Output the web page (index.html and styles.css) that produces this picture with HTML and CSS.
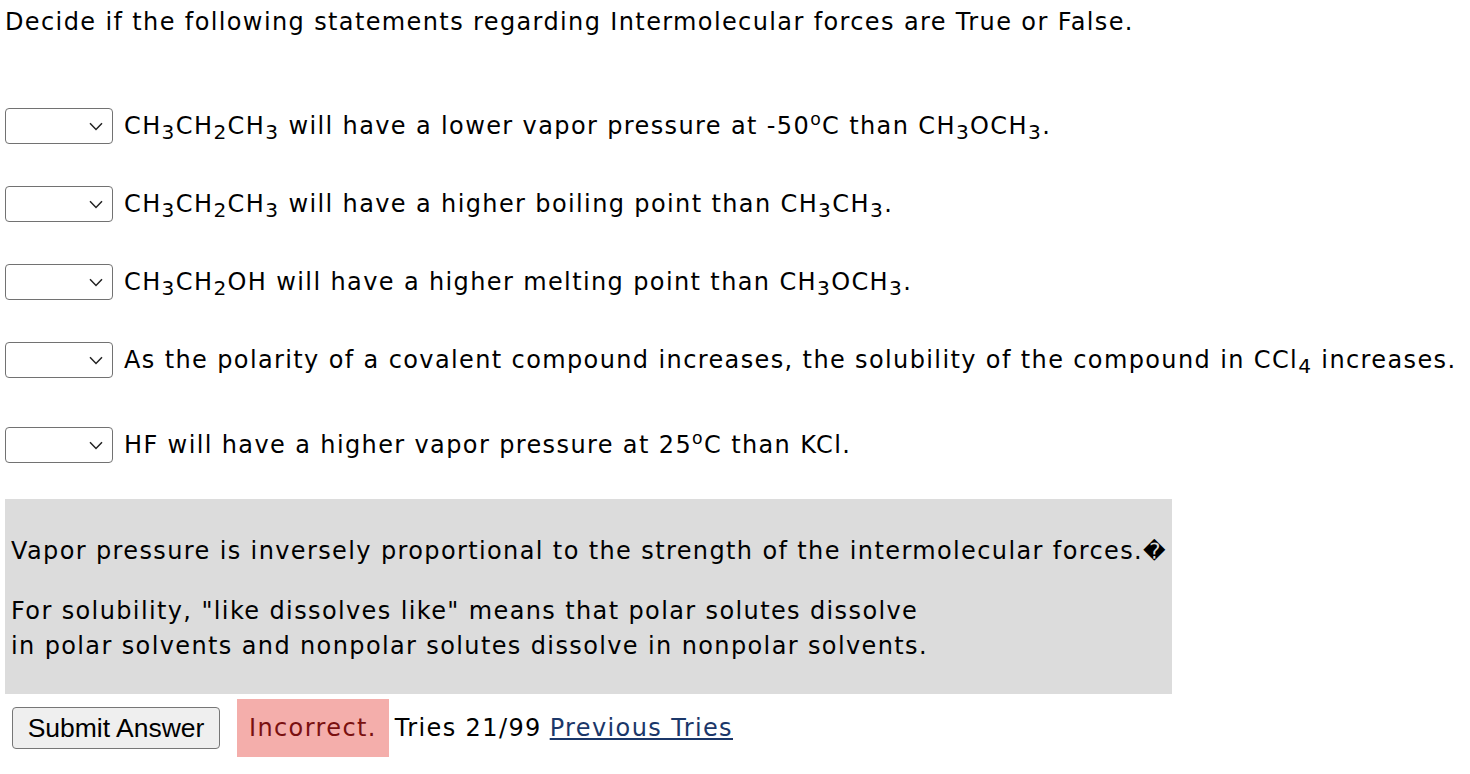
FILE: index.html
```html
<!DOCTYPE html>
<html>
<head>
<meta charset="utf-8">
<link rel="stylesheet" href="styles.css">
</head>
<body>
<div class="page">
  <p class="intro">Decide if the following statements regarding Intermolecular forces are True or False.</p>
  <div class="questions">
    <div class="row r1">
      <div class="sel"><svg width="14" height="9" viewBox="0 0 14 9"><path d="M1 1.2 L7 7.4 L13 1.2" fill="none" stroke="#222" stroke-width="1.5"/></svg></div>
      <span class="stmt">CH<sub>3</sub>CH<sub>2</sub>CH<sub>3</sub> will have a lower vapor pressure at -50<sup>o</sup>C than CH<sub>3</sub>OCH<sub>3</sub>.</span>
    </div>
    <div class="row r2">
      <div class="sel"><svg width="14" height="9" viewBox="0 0 14 9"><path d="M1 1.2 L7 7.4 L13 1.2" fill="none" stroke="#222" stroke-width="1.5"/></svg></div>
      <span class="stmt">CH<sub>3</sub>CH<sub>2</sub>CH<sub>3</sub> will have a higher boiling point than CH<sub>3</sub>CH<sub>3</sub>.</span>
    </div>
    <div class="row r3">
      <div class="sel"><svg width="14" height="9" viewBox="0 0 14 9"><path d="M1 1.2 L7 7.4 L13 1.2" fill="none" stroke="#222" stroke-width="1.5"/></svg></div>
      <span class="stmt">CH<sub>3</sub>CH<sub>2</sub>OH will have a higher melting point than CH<sub>3</sub>OCH<sub>3</sub>.</span>
    </div>
    <div class="row r4">
      <div class="sel"><svg width="14" height="9" viewBox="0 0 14 9"><path d="M1 1.2 L7 7.4 L13 1.2" fill="none" stroke="#222" stroke-width="1.5"/></svg></div>
      <span class="stmt">As the polarity of a covalent compound increases, the solubility of the compound in CCl<sub>4</sub> increases.</span>
    </div>
    <div class="row r5">
      <div class="sel"><svg width="14" height="9" viewBox="0 0 14 9"><path d="M1 1.2 L7 7.4 L13 1.2" fill="none" stroke="#222" stroke-width="1.5"/></svg></div>
      <span class="stmt">HF will have a higher vapor pressure at 25<sup>o</sup>C than KCl.</span>
    </div>
  </div>
  <div class="hint">
    <p class="h1">Vapor pressure is inversely proportional to the strength of the intermolecular forces.<span class="bad">&#xFFFD;</span></p>
    <p class="h2">For solubility, "like dissolves like" means that polar solutes dissolve<br>in polar solvents and nonpolar solutes dissolve in nonpolar solvents.</p>
  </div>
  <div class="footer">
    <button class="submit">Submit Answer</button>
    <span class="incorrect">Incorrect.</span>
    <span class="tries">Tries 21/99</span>
    <a class="prev" href="#">Previous Tries</a>
  </div>
</div>
</body>
</html>
```

FILE: styles.css
```css
html, body {
  margin: 0;
  padding: 0;
  background: #fff;
}
.page {
  font-family: "DejaVu Sans", Verdana, sans-serif;
  font-size: 24px;
  letter-spacing: 1.38px;
  color: #000;
  padding: 0 5px;
}
.intro {
  margin: 0;
  padding-top: 6px;
  line-height: 32px;
}
.questions {
  display: flex;
  flex-direction: column;
  margin-top: 70px;
}
.row {
  display: flex;
  align-items: center;
  gap: 11px;
  height: 36px;
}
.r2, .r3, .r4 { margin-top: 42px; }
.r5 { margin-top: 49px; }
.sel {
  width: 108px;
  height: 36px;
  box-sizing: border-box;
  border: 1px solid #727272;
  border-radius: 4px;
  background: #fff;
  display: flex;
  align-items: center;
  justify-content: flex-end;
  padding-right: 9px;
}
.sel svg { display: block; }
.stmt { white-space: nowrap; }
sub {
  font-size: 0.84em;
  vertical-align: -0.25em;
  line-height: 0;
}
sup {
  font-size: 0.72em;
  vertical-align: 0.55em;
  line-height: 0;
}
.hint {
  margin-top: 36px;
  width: 1167px;
  height: 195px;
  box-sizing: border-box;
  background: #dcdcdc;
  padding: 34px 6px 0;
}
.hint p { margin: 0; }
.h1 { line-height: 36px; }
.hint .h2 { margin-top: 24px; line-height: 35px; }
.bad { font-size: 22px; letter-spacing: 0; }
.footer {
  display: flex;
  align-items: center;
  margin-top: 5px;
  height: 58px;
}
.submit {
  font-family: "Liberation Sans", Arial, sans-serif;
  font-size: 26.5px;
  letter-spacing: 0;
  margin-left: 7px;
  width: 208px;
  height: 42px;
  background: #efefef;
  border: 1px solid #767676;
  border-radius: 4px;
  color: #000;
  padding: 0;
}
.incorrect {
  margin-left: 17px;
  background: #f4aeab;
  color: #7a1010;
  height: 58px;
  display: flex;
  align-items: center;
  padding: 0 12px 0 12px;
}
.tries { margin-left: 6px; }
.prev {
  margin-left: 8px;
  color: #1b3769;
  text-decoration: underline;
}
```
